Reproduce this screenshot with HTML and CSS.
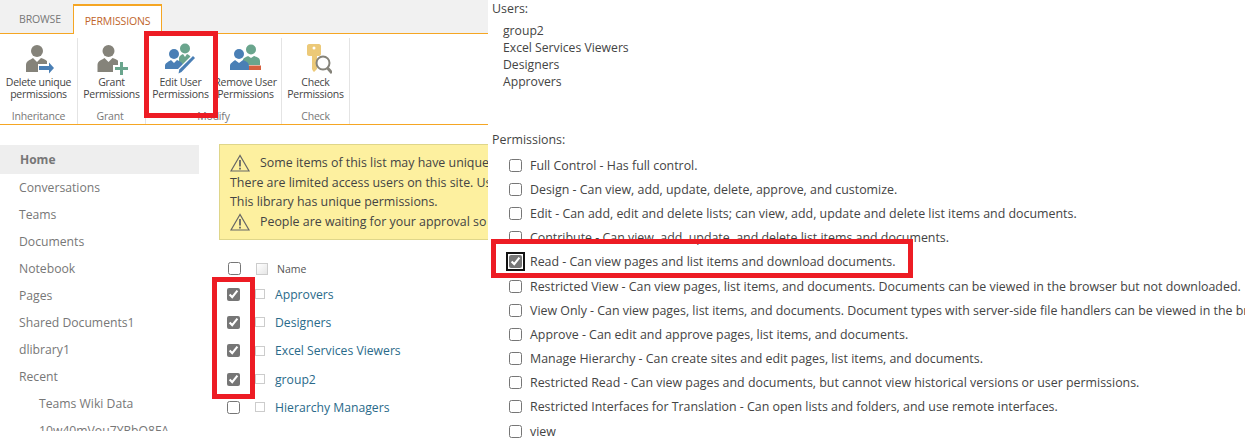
FILE: index.html
```html
<!DOCTYPE html>
<html lang="en">
<head>
<meta charset="utf-8">
<title>Permissions</title>
<link rel="stylesheet" href="styles.css">
</head>
<body>
<div class="page">
  <section class="left">
    <div class="tabs">
      <span class="tab">BROWSE</span>
      <span class="tab active">PERMISSIONS</span>
    </div>
    <div class="ribbon">
      <div class="group g1">
        <div class="cmds">
          <div class="cmd">
            <svg class="ico" viewBox="0 0 32 32"><circle cx="14" cy="8" r="6" fill="#85837a"/><path d="M3 29v-7c0-4 4-5 7-7l4 4 4-4c3 1 6 2 7 5v9z" fill="#85837a"/><path d="M15 21h9v-4l8 8-8 8v-4h-9z" fill="#fff"/><path d="M16 23h10v-3.500l5 5.500-5 5.500V27H16z" fill="#4a7fb5"/></svg>
            <span>Delete unique<br>permissions</span>
          </div>
        </div>
        <div class="glabel">Inheritance</div>
      </div>
      <div class="group g2">
        <div class="cmds">
          <div class="cmd">
            <svg class="ico" viewBox="0 0 32 32"><circle cx="12.500" cy="8" r="6" fill="#85837a"/><path d="M1.500 29v-7c0-4 4-5 7-7l4 4 4-4c3 1 6 2 7 5v9z" fill="#85837a"/><path d="M22 17h7v5h3v7h-3v3h-7v-3h-5v-7h5z" fill="#fff"/><path d="M24 19h3v5h5v3h-5v5h-3v-5h-5v-3h5z" fill="#6aa58d"/></svg>
            <span>Grant<br>Permissions</span>
          </div>
        </div>
        <div class="glabel">Grant</div>
      </div>
      <div class="group g3">
        <div class="cmds">
          <div class="cmd edit">
            <svg class="ico" viewBox="0 0 32 32"><circle cx="20" cy="5.500" r="5" fill="#6aa58d"/><path d="M14 19v-4c0-2 2-3 4-4l2 3 2-3c2 1 4 2 4 4v1l-7 7z" fill="#6aa58d"/><circle cx="9" cy="11" r="5" fill="#4a7fb5"/><path d="M0 26v-3c0-3 3-4 6-6l3 3 3-3c2 1 5 2 6 5v4z" fill="#4a7fb5"/><path d="M12 32l1-6L28 11l4 4-15 15z" fill="#fff"/><path d="M13.500 30.500l.8-4L28 13l2 2-13.500 14z" fill="#4a7fb5"/></svg>
            <span>Edit User<br>Permissions</span>
          </div>
          <div class="cmd remove">
            <svg class="ico" viewBox="0 0 32 32"><circle cx="21" cy="6.500" r="5" fill="#6aa58d"/><path d="M13 22v-5c0-2 3-3 5-4l3 2 3-2c3 1 6 2 6 5v4z" fill="#6aa58d"/><circle cx="9" cy="11" r="5" fill="#4a7fb5"/><path d="M0 27v-4c0-3 3-4 5-6l4 3 4-3c2 1 6 2 6 6v4z" fill="#4a7fb5"/><rect x="19" y="22.500" width="12" height="4.500" fill="#d6603f"/></svg>
            <span>Remove User<br>Permissions</span>
          </div>
        </div>
        <div class="glabel">Modify</div>
      </div>
      <div class="group g4">
        <div class="cmds">
          <div class="cmd">
            <svg class="ico" viewBox="0 0 32 32"><path d="M9 1h10c1 0 2 1 2 2v8c0 1-1 2-2 2h-2v13l-3 3-1-1-1-2V13H9c-1 0-2-1-2-2V3c0-1 1-2 2-2z" fill="#ecc978"/><circle cx="14" cy="5" r="1.500" fill="#fff"/><circle cx="23" cy="20" r="6.500" fill="#fff" stroke="#85837a" stroke-width="2"/><path d="M27.500 25l4.500 5" stroke="#85837a" stroke-width="3"/></svg>
            <span>Check<br>Permissions</span>
          </div>
        </div>
        <div class="glabel">Check</div>
      </div>
    </div>
    <div class="body">
      <nav class="nav">
        <a class="home">Home</a>
        <a>Conversations</a>
        <a>Teams</a>
        <a>Documents</a>
        <a>Notebook</a>
        <a>Pages</a>
        <a>Shared Documents1</a>
        <a>dlibrary1</a>
        <a>Recent</a>
        <a class="sub">Teams Wiki Data</a>
        <a class="sub">10w40mVou7YRbO8FA</a>
      </nav>
      <div class="main">
        <div class="notice">
          <div class="warn"><svg class="tri" viewBox="0 0 20 18"><path d="M10 1.500L1 17h18z" fill="none" stroke="#666" stroke-width="1.200"/><path d="M10 6v6.500M10 13.800v1.600" stroke="#666" stroke-width="1.800"/></svg><span>Some items of this list may have unique permissions which are not controlled</span></div>
          <div class="line">There are limited access users on this site. Users may have limited access</div>
          <div class="line">This library has unique permissions.</div>
          <div class="warn"><svg class="tri" viewBox="0 0 20 18"><path d="M10 1.500L1 17h18z" fill="none" stroke="#666" stroke-width="1.200"/><path d="M10 6v6.500M10 13.800v1.600" stroke="#666" stroke-width="1.800"/></svg><span>People are waiting for your approval so they can access this site</span></div>
        </div>
        <div class="listhead"><input type="checkbox" class="cb"><i class="mini head"></i><span>Name</span></div>
        <div class="row"><input type="checkbox" class="cb" checked><i class="mini"></i><a>Approvers</a></div>
        <div class="row"><input type="checkbox" class="cb" checked><i class="mini"></i><a>Designers</a></div>
        <div class="row"><input type="checkbox" class="cb" checked><i class="mini"></i><a>Excel Services Viewers</a></div>
        <div class="row"><input type="checkbox" class="cb" checked><i class="mini"></i><a>group2</a></div>
        <div class="row"><input type="checkbox" class="cb"><i class="mini"></i><a>Hierarchy Managers</a></div>
      </div>
    </div>
    <div class="mark mark-edit"></div>
    <div class="mark mark-checks"></div>
  </section>
  <section class="right">
    <div class="title">Users:</div>
    <ul class="users">
      <li>group2</li>
      <li>Excel Services Viewers</li>
      <li>Designers</li>
      <li>Approvers</li>
    </ul>
    <div class="title ptitle">Permissions:</div>
    <div class="perms">
      <label class="perm"><input type="checkbox" class="cb"><span>Full Control - Has full control.</span></label>
      <label class="perm"><input type="checkbox" class="cb"><span>Design - Can view, add, update, delete, approve, and customize.</span></label>
      <label class="perm"><input type="checkbox" class="cb"><span>Edit - Can add, edit and delete lists; can view, add, update and delete list items and documents.</span></label>
      <label class="perm"><input type="checkbox" class="cb"><span>Contribute - Can view, add, update, and delete list items and documents.</span></label>
      <label class="perm"><input type="checkbox" class="cb focus" checked><span>Read - Can view pages and list items and download documents.</span></label>
      <label class="perm"><input type="checkbox" class="cb"><span>Restricted View - Can view pages, list items, and documents. Documents can be viewed in the browser but not downloaded.</span></label>
      <label class="perm"><input type="checkbox" class="cb"><span>View Only - Can view pages, list items, and documents. Document types with server-side file handlers can be viewed in the browser but not downloaded.</span></label>
      <label class="perm"><input type="checkbox" class="cb"><span>Approve - Can edit and approve pages, list items, and documents.</span></label>
      <label class="perm"><input type="checkbox" class="cb"><span>Manage Hierarchy - Can create sites and edit pages, list items, and documents.</span></label>
      <label class="perm"><input type="checkbox" class="cb"><span>Restricted Read - Can view pages and documents, but cannot view historical versions or user permissions.</span></label>
      <label class="perm"><input type="checkbox" class="cb"><span>Restricted Interfaces for Translation - Can open lists and folders, and use remote interfaces.</span></label>
      <label class="perm"><input type="checkbox" class="cb"><span>view</span></label>
    </div>
    <div class="mark mark-read"></div>
  </section>
</div>
</body>
</html>
```
FILE: styles.css
```css
* { box-sizing: border-box; }
html, body { margin: 0; padding: 0; background: #fff; }
body { width: 1245px; height: 441px; overflow: hidden; font-family: "Open Sans", "Noto Sans", "Liberation Sans", sans-serif; font-size: 12.400px; color: #444; }
.page { display: flex; width: 1245px; height: 441px; overflow: hidden; position: relative; }
.left { width: 488px; flex: none; overflow: hidden; height: 441px; }
.right { flex: 1; min-width: 0; padding-left: 4px; overflow: hidden; }

.tabs { height: 34px; background: #f1f1f1; border-bottom: 1px solid #f5a623; display: flex; align-items: flex-end; padding-left: 7px; }
.tab { height: 29px; width: 66px; font-size: 10.500px; letter-spacing: -.15px; color: #777; display: flex; align-items: center; justify-content: center; padding-top: 1px; }
.tab.active { width: 89px; height: 30px; margin-bottom: -1px; background: #fff; color: #c0642a; border: 1px solid #f5a623; border-top-width: 2px; border-bottom: 0; }

.ribbon { height: 91px; border-bottom: 1px solid #f5a623; display: flex; padding-top: 4px; }
.group { display: flex; flex-direction: column; border-right: 1px solid #e4e4e4; height: 86px; flex: none; }
.g1 { width: 78px; }
.g2 { width: 68px; }
.g2 .glabel { padding-right: 3px; }
.g3 { width: 136px; }
.g4 { width: 68px; }
.cmds { display: flex; flex: 1; }
.cmd { flex: 1; display: flex; flex-direction: column; align-items: center; font-size: 10.500px; line-height: 11.500px; letter-spacing: -.25px; text-align: center; white-space: nowrap; color: #444; }
.cmd.edit { flex: none; width: 69px; }
.cmd.remove { flex: none; width: 61px; }
.cmd .ico { width: 32px; height: 32px; margin: 5px 0 2px; flex: none; }
.cmd span { display: block; }
.glabel { height: 16px; text-align: center; font-size: 10.500px; letter-spacing: -.2px; color: #777; line-height: 16px; }

.body { display: flex; padding-top: 20px; height: 305px; }
.nav { width: 199px; flex: none; height: 286px; overflow: hidden; display: flex; flex-direction: column; font-size: 12.200px; }
.nav a { display: block; flex: none; height: 27px; line-height: 27px; padding-left: 19px; color: #777; }
.nav a.home { height: 29px; line-height: 29px; padding-left: 20px; background: #eee; font-weight: 700; font-size: 12px; color: #777; }
.nav a.sub { padding-left: 39px; }

.main { margin-left: 20px; width: 300px; flex: none; margin-top: -1px; }
.notice { height: 96px; width: 300px; background: #fdf09f; border: 1px solid #dfd68a; padding: 7px 0 0 10px; color: #444; white-space: nowrap; overflow: hidden; line-height: 19px; }
.warn { display: flex; align-items: center; height: 21px; }
.line { height: 19px; }
.tri { width: 20px; height: 18px; margin-right: 10px; flex: none; }

.listhead { display: flex; align-items: center; height: 19px; margin-top: 19px; padding-left: 9px; font-size: 10.500px; color: #555; }
.listhead .mini { margin: 0 9px 0 15px; }
.row { display: flex; align-items: center; height: 28.300px; padding-left: 8px; font-size: 12.200px; color: #2a6a8a; }
.listhead + .row { margin-top: 2px; }
.mini { display: block; flex: none; width: 10px; height: 10px; border: 1px solid #ccc; margin: 0 10px 0 15px; background: #fff; }
.mini.head { width: 12px; height: 12px; background: linear-gradient(135deg, #fff, #e6e6e6); }

.cb { accent-color: #767676; width: 13px; height: 13px; margin: 0; flex: none; }
.cb.focus { outline: 2px solid #111; outline-offset: 1px; border-radius: 3px; }

.title { height: 17px; line-height: 17px; }
.users { list-style: none; margin: 5px 0 0; padding: 0 0 0 11px; font-size: 12.200px; }
.users li { height: 17px; line-height: 17px; }
.ptitle { margin-top: 41px; }
.perms { margin-top: 5px; padding-left: 17px; white-space: nowrap; }
.perm { display: flex; align-items: center; height: 24.200px; gap: 8px; }

.mark { position: absolute; border: 5px solid #ed1c24; pointer-events: none; }
.mark-edit { left: 144px; top: 31px; width: 74px; height: 87px; }
.mark-checks { left: 212px; top: 277px; width: 43px; height: 122px; }
.mark-read { left: 491px; top: 239px; width: 422px; height: 39px; }
```
